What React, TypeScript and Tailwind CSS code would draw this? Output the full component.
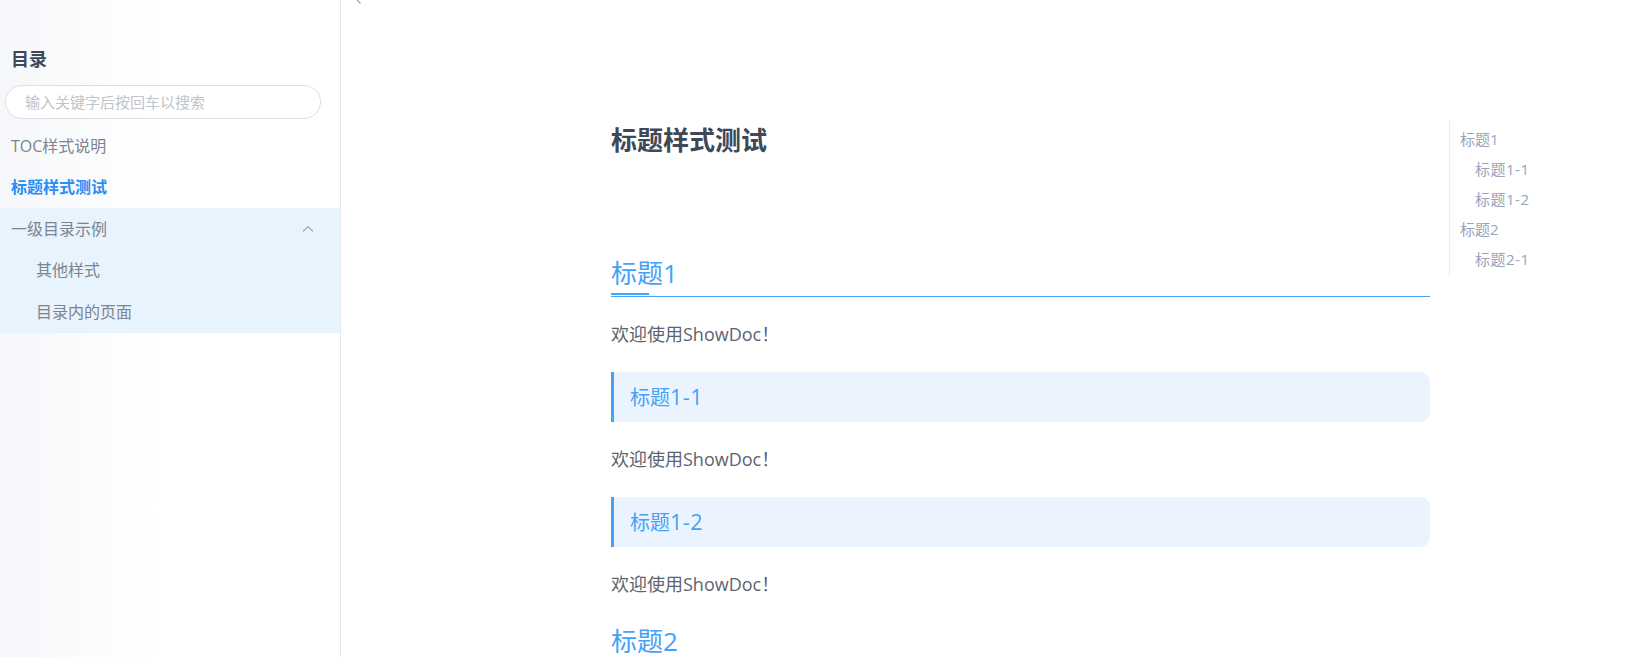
export default function App() {
  const para = "欢迎使用ShowDoc！";
  return (
    <div className="flex h-[657px] w-full overflow-hidden bg-white font-['Open_Sans','Noto_Sans_CJK_SC',sans-serif]">
      <aside className="w-[341px] shrink-0 border-r border-[#e6e8ee] bg-[linear-gradient(to_right,#f5f7fa,#ffffff_45%)] pt-[45px]">
        <div className="pl-[11px] text-[18px] font-bold leading-[28px] text-[#3d4959]">目录</div>
        <div className="mt-[12px] px-[5px]">
          <input
            readOnly
            placeholder="输入关键字后按回车以搜索"
            className="h-[34px] w-[316px] rounded-full border border-[#dcdfe6] bg-white pl-[19px] text-[15px] outline-none placeholder:text-[#c0c4cc]"
          />
        </div>
        <nav className="mt-[6px]">
          <div className="flex h-[41.5px] items-center pl-[11px] text-[16px] text-[#7e848d]">TOC样式说明</div>
          <div className="flex h-[41.5px] items-center pl-[11px] text-[16px] font-bold text-[#2b8ef5]">标题样式测试</div>
          <div className="bg-[#e7f3fd]">
            <div className="flex h-[41.5px] items-center pl-[11px] pr-[26px] text-[16px] text-[#7e848d]">
              <span>一级目录示例</span>
              <svg className="ml-auto" width="12" height="7" viewBox="0 0 12 7" fill="none">
                <polyline points="1,6.5 6,1.5 11,6.5" stroke="#a3a9b1" strokeWidth="1.1" />
              </svg>
            </div>
            <div className="flex h-[41.5px] items-center pl-[36px] text-[16px] text-[#7e848d]">其他样式</div>
            <div className="flex h-[41.5px] items-center pl-[36px] text-[16px] text-[#7e848d]">目录内的页面</div>
          </div>
        </nav>
      </aside>

      <main className="relative flex flex-1 items-start pl-[270px] pt-[120px]">
        <svg className="absolute left-[15px] top-0" width="6" height="5" viewBox="0 0 6 5" fill="none">
          <line x1="1" y1="0" x2="4.5" y2="3.5" stroke="#9aa3b0" strokeWidth="1.2" />
        </svg>

        <article className="w-[819px] shrink-0">
          <h1 className="text-[26px] font-bold leading-[40px] text-[#3e4857]">标题样式测试</h1>

          <h2 className="mt-[95px] text-[26px] leading-[36px] text-[#45a2f7]">标题1</h2>
          <div className="mt-[2px] h-[2px] w-[38px] bg-[#45a2f7]" />
          <div className="mt-[1px] h-[1px] w-full bg-[#40a6ff]" />

          <p className="mt-[22px] text-[18px] leading-[30px] text-[#5c6470]">{para}</p>

          <h3 className="mt-[23px] flex h-[50px] items-center rounded-r-[10px] border-l-[3px] border-[#45a2f7] bg-[#ebf3fe] pl-[16px] text-[20px] text-[#45a2f7]">
            <span>
              标题<span className="text-[21.5px] tracking-[0.5px]">1-1</span>
            </span>
          </h3>

          <p className="mt-[22px] text-[18px] leading-[30px] text-[#5c6470]">{para}</p>

          <h3 className="mt-[23px] flex h-[50px] items-center rounded-r-[10px] border-l-[3px] border-[#45a2f7] bg-[#ebf3fe] pl-[16px] text-[20px] text-[#45a2f7]">
            <span>
              标题<span className="text-[21.5px] tracking-[0.5px]">1-2</span>
            </span>
          </h3>

          <p className="mt-[22px] text-[18px] leading-[30px] text-[#5c6470]">{para}</p>

          <h2 className="mt-[24px] text-[26px] leading-[36px] text-[#45a2f7]">标题2</h2>
        </article>

        <aside className="ml-[19px] border-l border-[#eceef2] pb-[3px] pl-[10px] pr-[20px] pt-[4px] text-[15px] leading-[30px] text-[#97a4bb]">
          <div>标题1</div>
          <div className="pl-[15px] tracking-[0.5px]">标题1-1</div>
          <div className="pl-[15px] tracking-[0.5px]">标题1-2</div>
          <div>标题2</div>
          <div className="pl-[15px] tracking-[0.5px]">标题2-1</div>
        </aside>
      </main>
    </div>
  );
}
